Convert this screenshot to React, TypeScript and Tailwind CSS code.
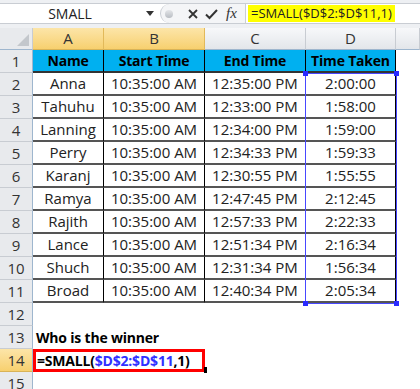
import React from "react";

const rows = [
  ["Anna", "10:35:00 AM", "12:35:00 PM", "2:00:00"],
  ["Tahuhu", "10:35:00 AM", "12:33:00 PM", "1:58:00"],
  ["Lanning", "10:35:00 AM", "12:34:00 PM", "1:59:00"],
  ["Perry", "10:35:00 AM", "12:34:33 PM", "1:59:33"],
  ["Karanj", "10:35:00 AM", "12:30:55 PM", "1:55:55"],
  ["Ramya", "10:35:00 AM", "12:47:45 PM", "2:12:45"],
  ["Rajith", "10:35:00 AM", "12:57:33 PM", "2:22:33"],
  ["Lance", "10:35:00 AM", "12:51:34 PM", "2:16:34"],
  ["Shuch", "10:35:00 AM", "12:31:34 PM", "1:56:34"],
  ["Broad", "10:35:00 AM", "12:40:34 PM", "2:05:34"],
];

const rowHead =
  "flex items-center justify-center bg-[#e8eaed] border-r border-b border-r-[#9eb6ce] border-b-[#c8ccd2] text-[#333] h-[23px]";

function RowHead({ n, active }: { n: number; active?: boolean }) {
  return (
    <div
      className={
        active
          ? "flex items-center justify-center bg-gradient-to-b from-[#fce5a8] to-[#f7d06e] border-r border-b border-r-[#9eb6ce] border-b-[#d9b357] text-[#333] h-[23px]"
          : rowHead
      }
    >
      {n}
    </div>
  );
}

function ColHead({ label, active }: { label: string; active?: boolean }) {
  return (
    <div
      className={
        active
          ? "flex items-center justify-center bg-gradient-to-b from-[#fce5a8] to-[#f7d06e] border-r border-b border-r-[#e2b95a] border-b-[#d9b357] text-[#333]"
          : "flex items-center justify-center bg-gradient-to-b from-[#f7f8fa] to-[#e3e6ea] border-r border-b border-r-[#c8ccd2] border-b-[#9eb6ce] text-[#333]"
      }
    >
      {label}
    </div>
  );
}

export default function App() {
  return (
    <div className="w-[420px] h-[389px] overflow-hidden bg-white text-[15px] font-['Open_Sans',sans-serif]">
      {/* Formula bar */}
      <div className="h-[28px] bg-[#eef0f3] pt-[3px]">
        <div className="flex h-[21px] bg-white border-y border-[#c9cdd3]">
          <div className="w-[140px] flex items-center justify-center text-[14px] text-[#222]">SMALL</div>
          <div className="w-[20px] flex items-center justify-center">
            <svg width="8" height="5" viewBox="0 0 8 5">
              <path d="M0 0h8L4 5z" fill="#333" />
            </svg>
          </div>
          <div className="w-[85px] flex items-center bg-[#f4f5f7] rounded-l-full border-l border-[#c9cdd3]">
            <div className="w-[16px] flex justify-center">
              <div className="w-[8px] h-[8px] rounded-full bg-gradient-to-b from-[#e4e6e9] to-[#b9bdc3]" />
            </div>
            <svg width="12" height="12" viewBox="0 0 12 12" className="ml-[10px]">
              <path d="M2 2l8 8M10 2l-8 8" stroke="#333" strokeWidth="1.8" />
            </svg>
            <svg width="13" height="12" viewBox="0 0 13 12" className="ml-[6px]">
              <path d="M1 6.5l3.5 3.5L12 2" stroke="#333" strokeWidth="2" fill="none" />
            </svg>
            <span className="ml-[8px] text-[15px] italic text-[#333] font-['Liberation_Serif',serif]">
              fx
            </span>
          </div>
          <div className="flex-1 flex items-center border-l border-[#c9cdd3] pl-[2px]">
            <span className="bg-[#ffff00] px-[3px] h-[17px] leading-[17px] text-[13px] text-[#222]">
              =SMALL($D$2:$D$11,1)
            </span>
          </div>
        </div>
      </div>

      {/* Grid */}
      <div className="relative grid grid-cols-[33px_71px_101px_101px_90px_1fr] auto-rows-[23px] [grid-template-rows:22px]">
        <div className="relative bg-[#e8eaed] border-r border-b border-r-[#c8ccd2] border-b-[#9eb6ce]">
          <svg width="12" height="12" viewBox="0 0 12 12" className="absolute right-[3px] bottom-[3px]">
            <path d="M12 0v12H0z" fill="#c3c7cc" />
          </svg>
        </div>
        <ColHead label="A" active />
        <ColHead label="B" active />
        <ColHead label="C" />
        <ColHead label="D" />
        <ColHead label="" />

        {/* Row 1 */}
        <RowHead n={1} />
        {["Name", "Start Time", "End Time", "Time Taken"].map((h) => (
          <div
            key={h}
            className="flex items-center justify-center bg-[#00b0f0] text-[14px] tracking-[-0.2px] font-bold text-black border-r border-black border-b-2 border-b-[#333]"
          >
            {h}
          </div>
        ))}
        <div />

        {rows.map((r, i) => (
          <React.Fragment key={r[0]}>
            <RowHead n={i + 2} />
            {r.map((c, j) => (
              <div
                key={j}
                className="flex items-center justify-center text-[#222] border-r border-r-black border-b-2 border-b-[#555]"
              >
                {c}
              </div>
            ))}
            <div />
          </React.Fragment>
        ))}

        {/* Row 12 */}
        <RowHead n={12} />
        <div className="col-span-5" />

        {/* Row 13 */}
        <RowHead n={13} />
        <div className="col-span-5 flex items-center pl-[3px] text-[14px] tracking-[-0.2px] font-bold text-black whitespace-nowrap">
          Who is the winner
        </div>

        {/* Row 14 */}
        <RowHead n={14} active />
        <div className="relative col-span-2 flex items-center pl-[1px] border-[3px] border-[#ff0000] text-[14px] tracking-[-0.2px] font-bold text-black whitespace-nowrap">
          =SMALL(<span className="text-[#3030ff]">$D$2:$D$11</span>,1)
          <div className="absolute right-[-5px] bottom-[-4px] w-[3px] h-[6px] bg-black" />
        </div>
        <div className="col-span-3" />

        {/* Row 15 */}
        <RowHead n={15} />
        <div className="col-span-5" />

        {/* Selection around D2:D11 */}
        <div className="pointer-events-none absolute left-[305px] top-[45px] w-[92px] h-[231px] border border-[#4848ff]">
          <div className="absolute left-[-3px] top-[-3px] w-[5px] h-[5px] bg-[#2a2aff]" />
          <div className="absolute right-[-3px] top-[-3px] w-[5px] h-[5px] bg-[#2a2aff]" />
          <div className="absolute left-[-3px] bottom-[-3px] w-[5px] h-[5px] bg-[#2a2aff]" />
          <div className="absolute right-[-3px] bottom-[-3px] w-[5px] h-[5px] bg-[#2a2aff]" />
        </div>
      </div>
    </div>
  );
}
